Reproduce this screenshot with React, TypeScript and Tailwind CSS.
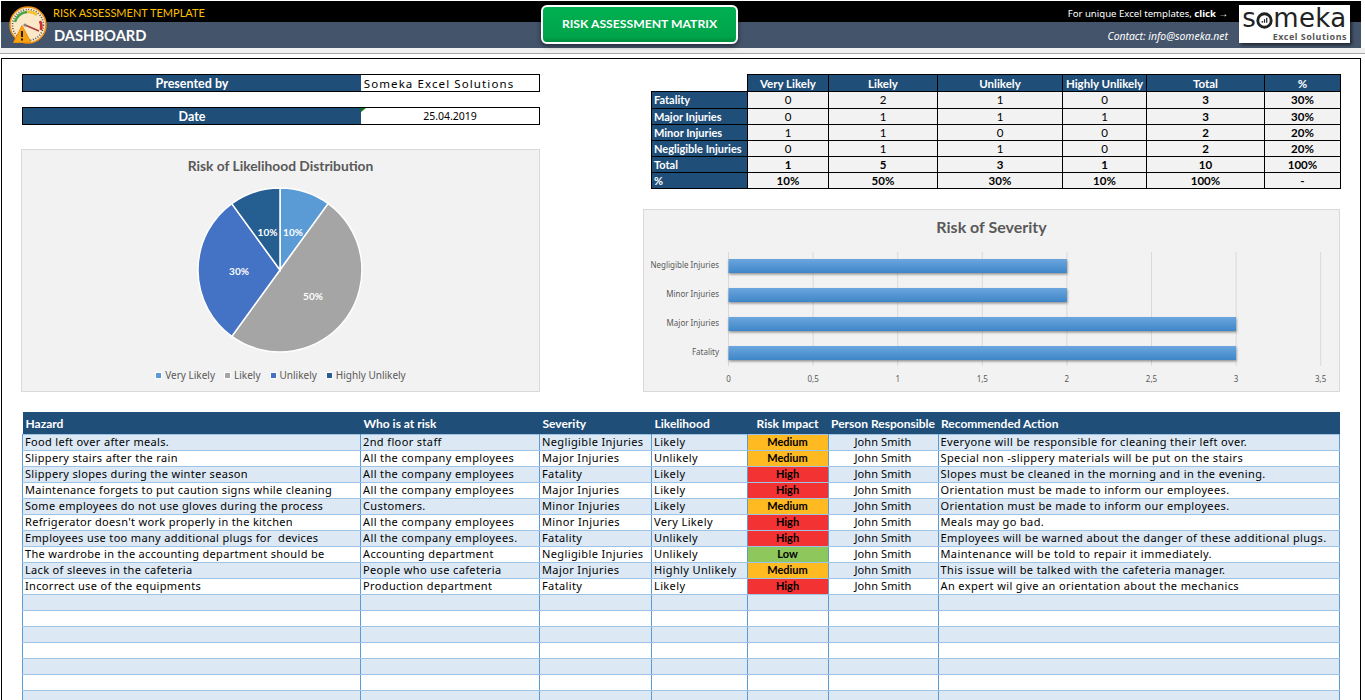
const body = "font-['Noto_Sans',sans-serif]";
const head = "font-['Lato',sans-serif]";

const matrixCols = ["Very Likely", "Likely", "Unlikely", "Highly Unlikely", "Total", "%"];
const matrixRows = [
  { name: "Fatality", cells: ["0", "2", "1", "0", "3", "30%"] },
  { name: "Major Injuries", cells: ["0", "1", "1", "1", "3", "30%"] },
  { name: "Minor Injuries", cells: ["1", "1", "0", "0", "2", "20%"] },
  { name: "Negligible Injuries", cells: ["0", "1", "1", "0", "2", "20%"] },
  { name: "Total", cells: ["1", "5", "3", "1", "10", "100%"], strong: true },
  { name: "%", cells: ["10%", "50%", "30%", "10%", "100%", "-"], strong: true },
];

const hazards = [
  ["Food left over after meals.", "2nd floor staff", "Negligible Injuries", "Likely", "Medium", "Everyone will be responsible for cleaning their left over."],
  ["Slippery stairs after the rain", "All the company employees", "Major Injuries", "Unlikely", "Medium", "Special non -slippery materials will be put on the stairs"],
  ["Slippery slopes during the winter season", "All the company employees", "Fatality", "Likely", "High", "Slopes must be cleaned in the morning and in the evening."],
  ["Maintenance forgets to put caution signs while cleaning", "All the company employees", "Major Injuries", "Likely", "High", "Orientation must be made to inform our employees."],
  ["Some employees do not use gloves during the process", "Customers.", "Minor Injuries", "Likely", "Medium", "Orientation must be made to inform our employees."],
  ["Refrigerator doesn't work properly in the kitchen", "All the company employees", "Minor Injuries", "Very Likely", "High", "Meals may go bad."],
  ["Employees use too many additional plugs for  devices", "All the company employees.", "Fatality", "Unlikely", "High", "Employees will be warned about the danger of these additional plugs."],
  ["The wardrobe in the accounting department should be", "Accounting department", "Negligible Injuries", "Unlikely", "Low", "Maintenance will be told to repair it immediately."],
  ["Lack of sleeves in the cafeteria", "People who use cafeteria", "Major Injuries", "Highly Unlikely", "Medium", "This issue will be talked with the cafeteria manager."],
  ["Incorrect use of the equipments", "Production department", "Fatality", "Likely", "High", "An expert wil give an orientation about the mechanics"],
];

const pieSlices = [
  { label: "Very Likely", share: 0.1, color: "#5b9bd5" },
  { label: "Likely", share: 0.5, color: "#a5a5a5" },
  { label: "Unlikely", share: 0.3, color: "#4472c4" },
  { label: "Highly Unlikely", share: 0.1, color: "#255e91" },
];

const severityBars = [
  { name: "Negligible Injuries", value: 2, y: 14 },
  { name: "Minor Injuries", value: 2, y: 43 },
  { name: "Major Injuries", value: 3, y: 72 },
  { name: "Fatality", value: 3, y: 101 },
];

function impactClass(impact: string) {
  if (impact === "High") return "bg-[#f33333]";
  if (impact === "Low") return "bg-[#8ec85c]";
  return "bg-[#ffb921]";
}

function GaugeIcon() {
  return (
    <svg width="38" height="38" viewBox="0 0 38 38">
      <circle cx="19" cy="19" r="18" fill="#fbe8c8" stroke="#ee8f12" strokeWidth="1.5" />
      <circle cx="19" cy="19" r="15.5" fill="none" stroke="#555" strokeWidth="1.6" strokeDasharray="1 1.6" />
      <path d="M6 16 A13 13 0 0 1 18 6" fill="none" stroke="#3fa649" strokeWidth="2.6" />
      <path d="M18 6 A13 13 0 0 1 28 9" fill="none" stroke="#f2c230" strokeWidth="2.6" />
      <path d="M31 15 A13 13 0 0 1 32 24" fill="none" stroke="#cf2f2f" strokeWidth="2.6" />
      <path d="M16 19 L30 25" stroke="#a83a3a" strokeWidth="1.4" />
      <circle cx="16" cy="19" r="1.6" fill="#888" />
      <path d="M4.5 36.5 L13 19.5 L22 36.5 Z" fill="#f7a20f" stroke="#ee8f12" strokeLinejoin="round" />
      <path d="M13 25 V31" stroke="#222" strokeWidth="2" />
      <path d="M13 32.5 V34.5" stroke="#222" strokeWidth="2" />
    </svg>
  );
}

function Logo() {
  return (
    <div className="flex h-[38px] w-[111px] flex-col items-center bg-white shadow-[2px_2px_3px_rgba(0,0,0,0.55)]">
      <div className="flex h-[26px] items-center font-['DejaVu_Sans',sans-serif] text-[26px] leading-none tracking-[0.4px] text-[#222]">
        <span>s</span>
        <svg width="17" height="17" viewBox="0 0 19 19" className="mt-[5px]">
          <circle cx="9.5" cy="9.5" r="7.5" fill="none" stroke="#222" strokeWidth="3.2" />
          <path d="M7 12 V10 M9.5 12 V8 M12 12 V6.5" stroke="#222" strokeWidth="1.4" />
        </svg>
        <span>meka</span>
      </div>
      <div className="w-full pr-[3px] pt-[1px] text-right font-['Noto_Sans',sans-serif] text-[9px] font-bold leading-[10px] tracking-[0.5px] text-[#595959]">
        Excel Solutions
      </div>
    </div>
  );
}

function Header() {
  return (
    <div className="relative ml-[1px] mr-[4px] mt-[1px]">
      <div className="flex h-[21px] items-center justify-between bg-black pl-[52px] pr-[133px] pt-[4px]">
        <span className={`${head} text-[11px] text-[#ffc000]`}>RISK ASSESSMENT TEMPLATE</span>
        <span className={`${body} mt-[1px] text-[9.6px] text-white`}>
          For unique Excel templates, <b>click</b> →
        </span>
      </div>
      <div className="flex h-[26px] items-center justify-between bg-[#44546a] pl-[53px] pr-[133px]">
        <span className={`${head} text-[14.7px] font-bold text-white`}>DASHBOARD</span>
        <span className={`${body} mt-[3px] text-[10.4px] italic text-white`}>Contact: info@someka.net</span>
      </div>
      <div className="absolute left-[8px] top-[5px]">
        <GaugeIcon />
      </div>
      <div className={`${head} absolute left-[540px] top-[4px] flex h-[39px] w-[197px] items-center justify-center rounded-[6px] border-[2px] border-white bg-[linear-gradient(#00b050,#00a44a_85%,#008c3e)] text-[12.2px] font-bold text-white shadow-[0_2px_5px_rgba(0,0,0,0.5)]`}>
        RISK ASSESSMENT MATRIX
      </div>
      <div className="absolute left-[1238px] top-[4px]">
        <Logo />
      </div>
    </div>
  );
}

function InfoRow({ label, value, flagged, spaced }: { label: string; value: string; flagged?: boolean; spaced?: boolean }) {
  return (
    <div className="flex h-[18px] border border-black">
      <div className={`${head} flex w-[338px] items-center justify-center bg-[#1f4e79] pt-[3px] text-[12.5px] font-bold text-white`}>
        {label}
      </div>
      <div className={`${body} relative flex flex-1 items-center justify-center pt-[2px] text-black ${spaced ? "pr-[22px] text-[11.5px] tracking-[1.1px]" : "text-[10.5px]"}`}>
        {flagged && <div className="absolute left-0 top-0 h-0 w-0 border-r-[5px] border-t-[4px] border-r-transparent border-t-[#107c10]" />}
        {value}
      </div>
    </div>
  );
}

function PieChart() {
  let angle = -Math.PI / 2;
  const cx = 85;
  const cy = 85;
  const r = 82;
  const paths = pieSlices.map((s) => {
    const start = angle;
    angle += s.share * Math.PI * 2;
    const large = s.share > 0.5 ? 1 : 0;
    const d = `M${cx} ${cy} L${cx + r * Math.cos(start)} ${cy + r * Math.sin(start)} A${r} ${r} 0 ${large} 1 ${cx + r * Math.cos(angle)} ${cy + r * Math.sin(angle)} Z`;
    return <path key={s.label} d={d} fill={s.color} stroke="#fff" strokeWidth="1.5" />;
  });
  const labels = [
    { t: "10%", x: 98, y: 50.5 },
    { t: "10%", x: 72.5, y: 50.5 },
    { t: "30%", x: 44, y: 90 },
    { t: "50%", x: 118, y: 114.5 },
  ];

  return (
    <div className="flex h-[243px] w-[519px] flex-col items-center border border-[#d9d9d9] bg-[#f2f2f2]">
      <div className={`${head} mt-[7px] text-[13.8px] font-bold leading-[18px] text-[#595959]`}>
        Risk of Likelihood Distribution
      </div>
      <svg width="170" height="170" viewBox="0 0 170 170" className="-ml-[2px] mt-[10px]">
        {paths}
        {labels.map((l, i) => (
          <text key={i} x={l.x} y={l.y} textAnchor="middle" fontFamily="Lato, sans-serif" fontSize="10" fontWeight="700" fill="#fff">
            {l.t}
          </text>
        ))}
      </svg>
      <div className={`${body} mt-[13px] flex gap-[9px] text-[10px] leading-[14px] text-[#595959]`}>
        {pieSlices.map((s) => (
          <div key={s.label} className="flex items-center gap-[3px]">
            <span className="h-[7px] w-[7px] border border-white" style={{ backgroundColor: s.color }} />
            {s.label}
          </div>
        ))}
      </div>
    </div>
  );
}

function MatrixTable() {
  const widths = [96, 81, 109, 125, 84, 118, 76];
  return (
    <table className={`${head} ml-[8px] w-[689px] table-fixed border-collapse text-[11.5px]`}>
      <colgroup>
        {widths.map((w, i) => (
          <col key={i} style={{ width: w }} />
        ))}
      </colgroup>
      <thead>
        <tr className="h-[17px]">
          <th />
          {matrixCols.map((c) => (
            <th key={c} className="whitespace-nowrap border border-black bg-[#1f4e79] p-0 text-center font-bold leading-[15px] text-white">
              {c}
            </th>
          ))}
        </tr>
      </thead>
      <tbody>
        {matrixRows.map((row, r) => (
          <tr key={row.name} className={r === 0 ? "h-[17px]" : "h-[16px]"}>
            <td className={`overflow-hidden whitespace-nowrap border border-black bg-[#1f4e79] px-[2px] py-0 text-[11px] font-bold text-white ${r === 0 ? "pb-[2px] leading-[13px]" : "leading-[15px]"}`}>{row.name}</td>
            {row.cells.map((v, i) => (
              <td key={i} className={`border border-black bg-[#f2f2f2] p-0 text-center text-black ${row.strong || i >= 4 ? "font-bold" : ""} ${r === 0 ? "pb-[2px] leading-[13px]" : "leading-[15px]"}`}>
                {v}
              </td>
            ))}
          </tr>
        ))}
      </tbody>
    </table>
  );
}

function SeverityChart() {
  const x0 = 84.5;
  const step = 84.6;
  const ticks = [0, 0.5, 1, 1.5, 2, 2.5, 3, 3.5];
  return (
    <div className="mt-[20px] flex h-[183px] w-[697px] flex-col items-center border border-[#d9d9d9] bg-[#f2f2f2]">
      <div className={`${head} mt-[7px] text-[16px] font-bold leading-[20px] text-[#595959]`}>Risk of Severity</div>
      <svg width="695" height="145" viewBox="0 0 695 145" className="mt-[8px]">
        <defs>
          <linearGradient id="barFill" x1="0" y1="0" x2="0" y2="1">
            <stop offset="0" stopColor="#6ba6de" />
            <stop offset="1" stopColor="#3f86c8" />
          </linearGradient>
          <filter id="barShadow" x="-2%" y="-20%" width="104%" height="160%">
            <feDropShadow dx="0.5" dy="1.5" stdDeviation="1.2" floodColor="#000" floodOpacity="0.4" />
          </filter>
        </defs>
        {ticks.map((t, i) => (
          <g key={t}>
            <line x1={x0 + i * step} x2={x0 + i * step} y1="7" y2="121" stroke="#d9d9d9" />
            <text x={x0 + i * step} y="137" textAnchor="middle" fontFamily="Noto Sans, sans-serif" fontSize="8" fill="#595959">
              {String(t).replace(".", ",")}
            </text>
          </g>
        ))}
        {severityBars.map((b) => (
          <g key={b.name}>
            <text x="75" y={b.y + 8.5} textAnchor="end" fontFamily="Noto Sans, sans-serif" fontSize="8" fill="#595959">
              {b.name}
            </text>
            <rect x={x0} y={b.y} width={b.value * 2 * step} height="14" fill="url(#barFill)" filter="url(#barShadow)" />
          </g>
        ))}
      </svg>
    </div>
  );
}

function HazardTable() {
  const widths = [338, 179, 112, 95.5, 81, 110, 401.5];
  const cols = ["Hazard", "Who is at risk", "Severity", "Likelihood", "Risk Impact", "Person Responsible", "Recommended Action"];
  const blanks = Array.from({ length: 7 }, (_, i) => i);
  const cell = "border-x border-x-[#5b9bd5] border-y border-y-[#9dc3e6] p-0 pb-[2px] leading-[13px] whitespace-pre overflow-hidden";

  return (
    <table className={`${body} mt-[20px] w-[1317px] table-fixed border-collapse text-[11px] tracking-[0.38px] text-black`}>
      <colgroup>
        {widths.map((w, i) => (
          <col key={i} style={{ width: w }} />
        ))}
      </colgroup>
      <thead>
        <tr className="h-[22px] bg-[#1f4e79]">
          {cols.map((c, i) => (
            <th key={c} className={`${head} whitespace-nowrap p-0 pt-[2px] text-[12px] font-bold tracking-normal text-white ${i === 4 || i === 5 ? "text-center" : "pl-[3px] text-left"}`}>
              {c}
            </th>
          ))}
        </tr>
      </thead>
      <tbody>
        {hazards.map((r, i) => (
          <tr key={i} className={`h-[16px] ${i % 2 === 0 ? "bg-[#dce9f5]" : "bg-white"}`}>
            <td className={`${cell} pl-[2px] tracking-[0.33px]`}>{r[0]}</td>
            <td className={`${cell} pl-[2px]`}>{r[1]}</td>
            <td className={`${cell} pl-[2px]`}>{r[2]}</td>
            <td className={`${cell} pl-[2px]`}>{r[3]}</td>
            <td className={`${cell} ${head} ${impactClass(r[4])} text-center text-[11px] font-bold tracking-normal`}>{r[4]}</td>
            <td className={`${cell} text-center tracking-[0.1px]`}>John Smith</td>
            <td className={`${cell} pl-[2px]`}>{r[5]}</td>
          </tr>
        ))}
        {blanks.map((i) => (
          <tr key={i} className={`h-[16px] ${i % 2 === 0 ? "bg-[#dce9f5]" : "bg-white"}`}>
            {widths.map((w, j) => (
              <td key={j} className={cell} />
            ))}
          </tr>
        ))}
      </tbody>
    </table>
  );
}

export default function App() {
  return (
    <div className="h-[700px] w-[1365px] overflow-hidden bg-white">
      <Header />
      <div className="h-[5px] bg-[#f0f0f0]" />
      <div className="h-[1px] bg-[#a6a6a6]" />
      <div className="ml-[1px] mr-[4px] mt-[4px] h-[700px] border border-black pl-[20px] pt-[15px]">
        <div className="flex">
          <div className="flex w-[518px] flex-col">
            <InfoRow label="Presented by" value="Someka Excel Solutions" spaced />
            <div className="mt-[15px]">
              <InfoRow label="Date" value="25.04.2019" flagged />
            </div>
            <div className="-ml-[1px] mt-[24px]">
              <PieChart />
            </div>
          </div>
          <div className="ml-[103px] flex flex-col">
            <MatrixTable />
            <SeverityChart />
          </div>
        </div>
        <HazardTable />
      </div>
    </div>
  );
}
